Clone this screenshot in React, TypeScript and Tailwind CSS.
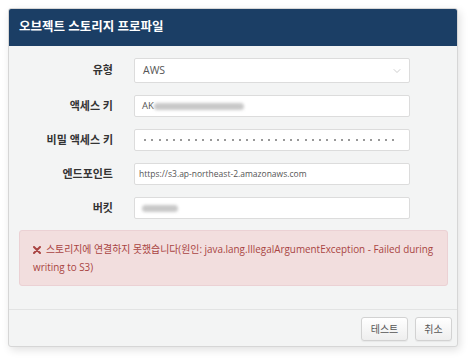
import { ChevronDown } from 'lucide-react';

const FONT = { fontFamily: '"Open Sans", "Noto Sans CJK KR", sans-serif' };

function Label({ children }: { children: React.ReactNode }) {
  return (
    <div className="w-[104px] shrink-0 text-right text-[11px] font-bold text-[#333]">{children}</div>
  );
}

function Blur({ w }: { w: number }) {
  return <span className="inline-block h-[7px] rounded-full bg-[#c8c8c8] blur-[1.5px]" style={{ width: w }} />;
}

export default function App() {
  const dots = Array.from({ length: 35 });

  return (
    <div className="w-[474px] h-[364px] bg-white p-2" style={FONT}>
      <div className="w-[450px] h-[339px] rounded-[3px] border border-[#d6d6d6] bg-[#f3f4f4] shadow-[2px_3px_8px_rgba(0,0,0,0.12)] flex flex-col overflow-hidden">
        {/* Header */}
        <div className="h-[37px] shrink-0 bg-[#1b3e65] px-[10px] flex items-center">
          <h1 className="text-[12.5px] font-bold text-white">오브젝트 스토리지 프로파일</h1>
        </div>

        {/* Body */}
        <div className="flex-1 pt-[12px]">
          <div className="flex flex-col gap-[12px]">
            <div className="flex items-center">
              <Label>유형</Label>
              <div className="ml-[21px] w-[276px] h-[25px] bg-white border border-[#dcdcdc] rounded-[2px] flex items-center justify-between pl-[8px] pr-[6px] text-[10.5px] text-[#555]">
                <span>AWS</span>
                <ChevronDown size={12} strokeWidth={1.5} className="text-[#bdbdbd]" />
              </div>
            </div>

            <div className="flex items-center">
              <Label>액세스 키</Label>
              <div className="ml-[21px] w-[276px] h-[22px] bg-white border border-[#dcdcdc] rounded-[2px] flex items-center pl-[7px] text-[9.5px] text-[#555]">
                <span>AK</span>
                <Blur w={90} />
              </div>
            </div>

            <div className="flex items-center">
              <Label>비밀 액세스 키</Label>
              <div className="ml-[21px] w-[276px] h-[22px] bg-white border border-[#dcdcdc] rounded-[2px] flex items-center pl-[9px] gap-[5.3px]">
                {dots.map((_, i) => (
                  <span key={i} className="w-[2px] h-[2px] rounded-full bg-[#777]" />
                ))}
              </div>
            </div>

            <div className="flex items-center">
              <Label>엔드포인트</Label>
              <div className="ml-[21px] w-[276px] h-[22px] bg-white border border-[#dcdcdc] rounded-[2px] flex items-center pl-[4px] text-[8.5px] text-[#555]">
                https://s3.ap-northeast-2.amazonaws.com
              </div>
            </div>

            <div className="flex items-center">
              <Label>버킷</Label>
              <div className="ml-[21px] w-[276px] h-[22px] bg-white border border-[#dcdcdc] rounded-[2px] flex items-center pl-[7px]">
                <Blur w={36} />
              </div>
            </div>
          </div>

          {/* Error alert */}
          <div className="mt-[11px] ml-[10px] mr-[9px] px-[13px] py-[9px] bg-[#f2dede] border border-[#ebd1d4] rounded-[3px] text-[9.9px] leading-[18px] text-[#a94442]">
            <svg width="8" height="8" viewBox="0 0 8 8" className="inline-block mr-[5px] align-[-0.5px]">
              <path d="M1 1L7 7M7 1L1 7" stroke="#a94442" strokeWidth="2" strokeLinecap="round" />
            </svg>
            스토리지에 연결하지 못했습니다(원인: java.lang.IllegalArgumentException - Failed during writing to S3)
          </div>
        </div>

        {/* Footer */}
        <div className="h-[37px] shrink-0 border-t border-[#e2e3e3] flex items-start justify-end gap-[7px] pt-[7px] pr-[5px]">
          <button className="w-[47px] h-[24px] rounded-[3px] border border-[#d2d2d2] bg-gradient-to-b from-white to-[#eeeeee] text-[10px] text-[#555] shadow-[0_1px_1px_rgba(0,0,0,0.05)]">
            테스트
          </button>
          <button className="w-[37px] h-[24px] rounded-[3px] border border-[#d2d2d2] bg-gradient-to-b from-white to-[#eeeeee] text-[10px] text-[#555] shadow-[0_1px_1px_rgba(0,0,0,0.05)]">
            취소
          </button>
        </div>
      </div>
    </div>
  );
}
